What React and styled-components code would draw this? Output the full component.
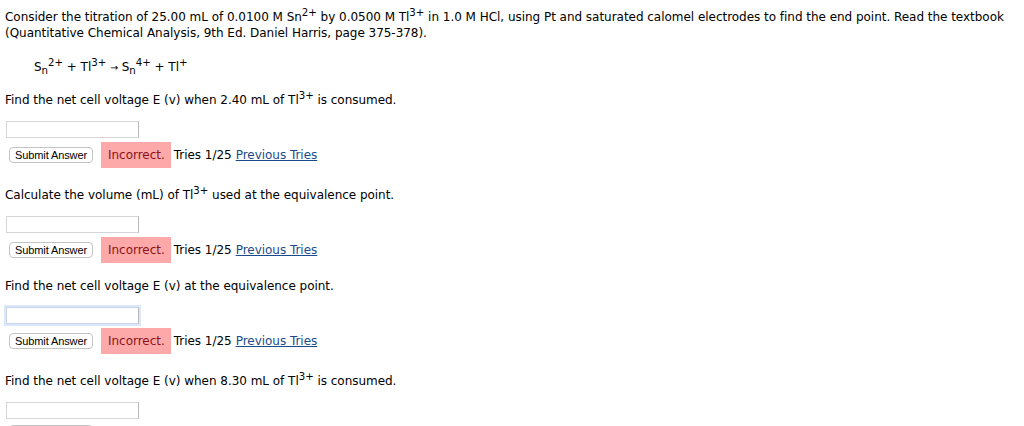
import React from "react";
import styled, { createGlobalStyle } from "styled-components";

const GlobalStyle = createGlobalStyle`
  html, body {
    margin: 0;
    padding: 0;
    background: #fff;
  }
  body {
    font-family: "DejaVu Sans", Verdana, sans-serif;
    font-size: 12px;
    color: #000;
  }
`;

const questions = [
  {
    text: (
      <>
        Find the net cell voltage E (v) when 2.40 mL of Tl<sup>3+</sup> is consumed.
      </>
    ),
    tries: 1,
  },
  {
    text: (
      <>
        Calculate the volume (mL) of Tl<sup>3+</sup> used at the equivalence point.
      </>
    ),
    tries: 1,
  },
  {
    text: <>Find the net cell voltage E (v) at the equivalence point.</>,
    tries: 1,
    focused: true,
  },
  {
    text: (
      <>
        Find the net cell voltage E (v) when 8.30 mL of Tl<sup>3+</sup> is consumed.
      </>
    ),
    tries: 0,
  },
];

const App = () => {
  return (
    <Page>
      <GlobalStyle />
      <Intro>
        Consider the titration of 25.00 mL of 0.0100 M Sn<sup>2+</sup> by 0.0500 M Tl
        <sup>3+</sup> in 1.0 M HCl, using Pt and saturated calomel electrodes to find the end
        point. Read the textbook (Quantitative Chemical Analysis, 9th Ed. Daniel Harris, page
        375-378).
      </Intro>
      <Equation>
        S<sub>n</sub>
        <sup>2+</sup> + Tl<sup>3+</sup> <Arrow>→</Arrow> S<sub>n</sub>
        <sup>4+</sup> + Tl<sup>+</sup>
      </Equation>
      <QuestionList>
        {questions.map((q, i) => (
          <Question key={i}>
            <Prompt>{q.text}</Prompt>
            <AnswerInput type="text" $focused={q.focused} />
            <ResultRow $answered={q.tries > 0}>
              <SubmitButton type="button">Submit Answer</SubmitButton>
              {q.tries > 0 && (
                <>
                  <Badge>Incorrect.</Badge>
                  <Tries>Tries {q.tries}/25</Tries>
                  <PrevLink href="#">Previous Tries</PrevLink>
                </>
              )}
            </ResultRow>
          </Question>
        ))}
      </QuestionList>
    </Page>
  );
};

const Page = styled.div`
  padding: 5px 5px;
  line-height: 16px;
  letter-spacing: -0.03px;

  sup,
  sub {
    font-size: 0.85em;
  }
`;

const Intro = styled.p`
  margin: 0;
  max-width: 1010px;
`;

const Equation = styled.p`
  margin: 14px 0 0 29px;
`;

const Arrow = styled.span`
  font-size: 0.8em;
`;

const QuestionList = styled.div`
  display: flex;
  flex-direction: column;
  gap: 15px;
  margin-top: 9px;
`;

const Question = styled.div``;

const Prompt = styled.p`
  margin: 0;
`;

const AnswerInput = styled.input`
  display: block;
  box-sizing: border-box;
  width: 133px;
  height: 17px;
  margin: 13px 0 0 1px;
  border: 1px solid ${({ $focused }) => ($focused ? "#c9d4e6" : "#d6d6d6")};
  border-right-color: #b9b9b9;
  box-shadow: ${({ $focused }) => ($focused ? "0 0 0 2px #dce7fb" : "none")};
  outline: none;
  background: #fff;
`;

const ResultRow = styled.div`
  display: flex;
  align-items: center;
  margin-top: ${({ $answered }) => ($answered ? "4px" : "6px")};
`;

const SubmitButton = styled.button`
  box-sizing: border-box;
  width: 84px;
  height: 16px;
  margin-left: 4px;
  padding: 0;
  border: 1px solid #c4c4c4;
  border-radius: 4px;
  background: #fff;
  font-family: "Liberation Sans", Arial, sans-serif;
  font-size: 11px;
  letter-spacing: -0.1px;
  color: #000;
`;

const Badge = styled.span`
  margin-left: 8px;
  padding: 5px 6px 5px 7px;
  background: #fda9a9;
  color: #8c1218;
`;

const Tries = styled.span`
  margin-left: 3px;
`;

const PrevLink = styled.a`
  margin-left: 4px;
  color: #1d4a8a;
  text-decoration: underline;
`;

export default App;
